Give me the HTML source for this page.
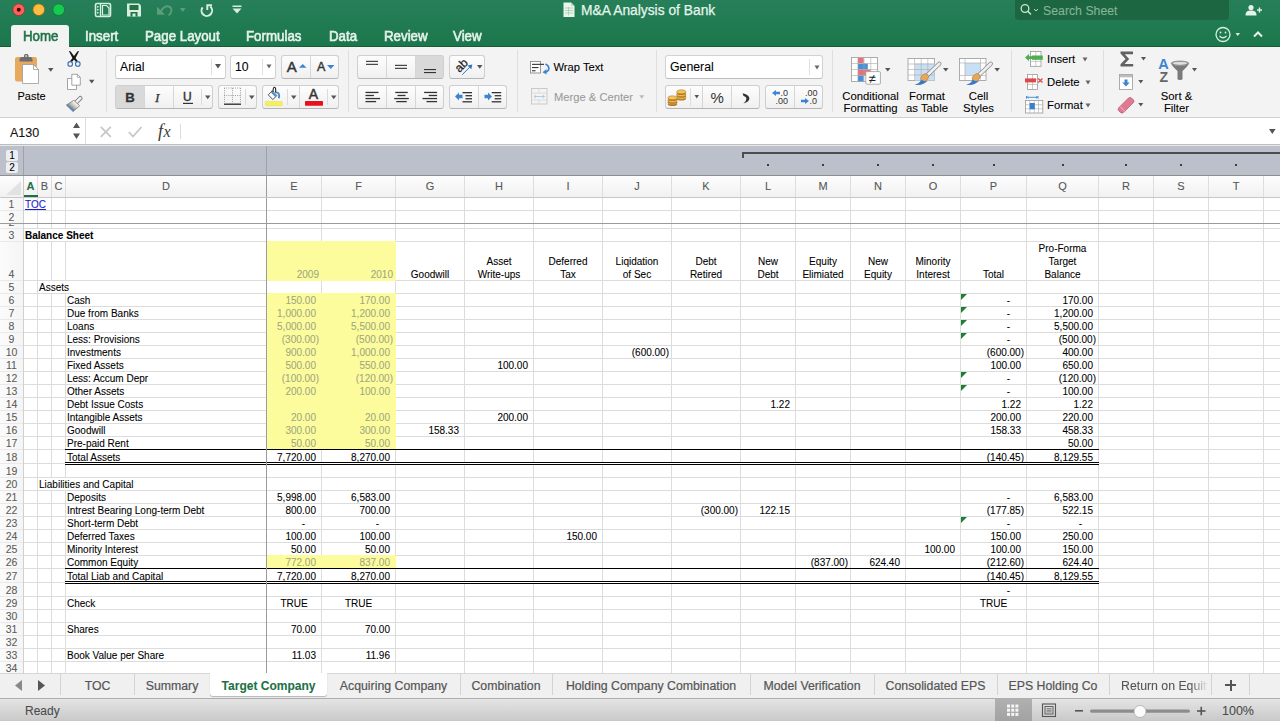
<!DOCTYPE html><html><head><meta charset="utf-8"><style>
*{margin:0;padding:0;box-sizing:border-box}
html,body{width:1280px;height:721px;overflow:hidden;background:#fff;font-family:"Liberation Sans", sans-serif;}
.a{position:absolute}
.t{position:absolute;white-space:pre;font-size:10px;line-height:13px;color:#000;-webkit-text-stroke:0.08px currentColor}
.gl{position:absolute;background:#dcdcdc}

</style></head><body>
<div class="gl" style="left:23px;top:210px;width:1257px;height:1px"></div>
<div class="gl" style="left:23px;top:223px;width:1257px;height:1px"></div>
<div class="gl" style="left:23px;top:241px;width:1257px;height:1px"></div>
<div class="gl" style="left:23px;top:280px;width:1257px;height:1px"></div>
<div class="gl" style="left:23px;top:293px;width:1257px;height:1px"></div>
<div class="gl" style="left:23px;top:306px;width:1257px;height:1px"></div>
<div class="gl" style="left:23px;top:319px;width:1257px;height:1px"></div>
<div class="gl" style="left:23px;top:332px;width:1257px;height:1px"></div>
<div class="gl" style="left:23px;top:345px;width:1257px;height:1px"></div>
<div class="gl" style="left:23px;top:358px;width:1257px;height:1px"></div>
<div class="gl" style="left:23px;top:371px;width:1257px;height:1px"></div>
<div class="gl" style="left:23px;top:384px;width:1257px;height:1px"></div>
<div class="gl" style="left:23px;top:397px;width:1257px;height:1px"></div>
<div class="gl" style="left:23px;top:410px;width:1257px;height:1px"></div>
<div class="gl" style="left:23px;top:423px;width:1257px;height:1px"></div>
<div class="gl" style="left:23px;top:436px;width:1257px;height:1px"></div>
<div class="gl" style="left:23px;top:449px;width:1257px;height:1px"></div>
<div class="gl" style="left:23px;top:463px;width:1257px;height:1px"></div>
<div class="gl" style="left:23px;top:477px;width:1257px;height:1px"></div>
<div class="gl" style="left:23px;top:490px;width:1257px;height:1px"></div>
<div class="gl" style="left:23px;top:503px;width:1257px;height:1px"></div>
<div class="gl" style="left:23px;top:516px;width:1257px;height:1px"></div>
<div class="gl" style="left:23px;top:529px;width:1257px;height:1px"></div>
<div class="gl" style="left:23px;top:542px;width:1257px;height:1px"></div>
<div class="gl" style="left:23px;top:555px;width:1257px;height:1px"></div>
<div class="gl" style="left:23px;top:568px;width:1257px;height:1px"></div>
<div class="gl" style="left:23px;top:582px;width:1257px;height:1px"></div>
<div class="gl" style="left:23px;top:596px;width:1257px;height:1px"></div>
<div class="gl" style="left:23px;top:609px;width:1257px;height:1px"></div>
<div class="gl" style="left:23px;top:622px;width:1257px;height:1px"></div>
<div class="gl" style="left:23px;top:635px;width:1257px;height:1px"></div>
<div class="gl" style="left:23px;top:648px;width:1257px;height:1px"></div>
<div class="gl" style="left:23px;top:661px;width:1257px;height:1px"></div>
<div class="gl" style="left:23px;top:228px;width:1257px;height:1px"></div>
<div class="gl" style="left:37px;top:197px;width:1px;height:27px"></div>
<div class="gl" style="left:37px;top:241px;width:1px;height:432px"></div>
<div class="gl" style="left:51px;top:197px;width:1px;height:27px"></div>
<div class="gl" style="left:51px;top:241px;width:1px;height:40px"></div>
<div class="gl" style="left:51px;top:293px;width:1px;height:185px"></div>
<div class="gl" style="left:51px;top:490px;width:1px;height:183px"></div>
<div class="gl" style="left:65px;top:197px;width:1px;height:27px"></div>
<div class="gl" style="left:65px;top:241px;width:1px;height:40px"></div>
<div class="gl" style="left:65px;top:293px;width:1px;height:185px"></div>
<div class="gl" style="left:65px;top:490px;width:1px;height:183px"></div>
<div class="gl" style="left:266px;top:197px;width:1px;height:476px"></div>
<div class="gl" style="left:321px;top:197px;width:1px;height:476px"></div>
<div class="gl" style="left:395px;top:197px;width:1px;height:476px"></div>
<div class="gl" style="left:464px;top:197px;width:1px;height:476px"></div>
<div class="gl" style="left:533px;top:197px;width:1px;height:476px"></div>
<div class="gl" style="left:602px;top:197px;width:1px;height:476px"></div>
<div class="gl" style="left:671px;top:197px;width:1px;height:476px"></div>
<div class="gl" style="left:740px;top:197px;width:1px;height:476px"></div>
<div class="gl" style="left:795px;top:197px;width:1px;height:476px"></div>
<div class="gl" style="left:850px;top:197px;width:1px;height:476px"></div>
<div class="gl" style="left:905px;top:197px;width:1px;height:476px"></div>
<div class="gl" style="left:960px;top:197px;width:1px;height:476px"></div>
<div class="gl" style="left:1026px;top:197px;width:1px;height:476px"></div>
<div class="gl" style="left:1098px;top:197px;width:1px;height:476px"></div>
<div class="gl" style="left:1153px;top:197px;width:1px;height:476px"></div>
<div class="gl" style="left:1208px;top:197px;width:1px;height:476px"></div>
<div class="gl" style="left:1263px;top:197px;width:1px;height:476px"></div>
<div class="gl" style="left:37px;top:223px;width:1px;height:6px"></div>
<div class="gl" style="left:51px;top:223px;width:1px;height:6px"></div>
<div class="gl" style="left:65px;top:223px;width:1px;height:6px"></div>
<div class="gl" style="left:266px;top:223px;width:1px;height:6px"></div>
<div class="gl" style="left:321px;top:223px;width:1px;height:6px"></div>
<div class="gl" style="left:395px;top:223px;width:1px;height:6px"></div>
<div class="gl" style="left:464px;top:223px;width:1px;height:6px"></div>
<div class="gl" style="left:533px;top:223px;width:1px;height:6px"></div>
<div class="gl" style="left:602px;top:223px;width:1px;height:6px"></div>
<div class="gl" style="left:671px;top:223px;width:1px;height:6px"></div>
<div class="gl" style="left:740px;top:223px;width:1px;height:6px"></div>
<div class="gl" style="left:795px;top:223px;width:1px;height:6px"></div>
<div class="gl" style="left:850px;top:223px;width:1px;height:6px"></div>
<div class="gl" style="left:905px;top:223px;width:1px;height:6px"></div>
<div class="gl" style="left:960px;top:223px;width:1px;height:6px"></div>
<div class="gl" style="left:1026px;top:223px;width:1px;height:6px"></div>
<div class="gl" style="left:1098px;top:223px;width:1px;height:6px"></div>
<div class="gl" style="left:1153px;top:223px;width:1px;height:6px"></div>
<div class="gl" style="left:1208px;top:223px;width:1px;height:6px"></div>
<div class="gl" style="left:1263px;top:223px;width:1px;height:6px"></div>
<div class="a" style="left:267px;top:241px;width:129px;height:40px;background:#fdfc9d"></div>
<div class="a" style="left:267px;top:293px;width:129px;height:157px;background:#fdfc9d"></div>
<div class="a" style="left:267px;top:555px;width:129px;height:14px;background:#fdfc9d"></div>
<div class="a" style="left:65px;top:449px;width:1034px;height:1px;background:#000"></div>
<div class="a" style="left:65px;top:462px;width:1034px;height:1px;background:#000"></div>
<div class="a" style="left:65px;top:463px;width:1034px;height:1px;background:#fff"></div>
<div class="a" style="left:65px;top:464px;width:1034px;height:1px;background:#000"></div>
<div class="a" style="left:65px;top:568px;width:1034px;height:1px;background:#000"></div>
<div class="a" style="left:65px;top:581px;width:1034px;height:1px;background:#000"></div>
<div class="a" style="left:65px;top:582px;width:1034px;height:1px;background:#fff"></div>
<div class="a" style="left:65px;top:583px;width:1034px;height:1px;background:#000"></div>
<div class="t" style="left:25px;top:198px;color:#1a1ad0;text-decoration:underline;">TOC</div>
<div class="t" style="left:25px;top:229px;font-weight:bold;">Balance Sheet</div>
<div class="t" style="left:267px;width:52px;text-align:right;top:268px;color:#a0a781;">2009</div>
<div class="t" style="left:322px;width:71px;text-align:right;top:268px;color:#a0a781;">2010</div>
<div class="t" style="left:39px;top:281px;">Assets</div>
<div class="t" style="left:67px;top:294px;">Cash</div>
<div class="t" style="left:267px;width:49px;text-align:right;top:294px;color:#a0a781;">150.00</div>
<div class="t" style="left:322px;width:68px;text-align:right;top:294px;color:#a0a781;">170.00</div>
<div class="t" style="left:961px;width:49px;text-align:right;top:294px;">-</div>
<div class="t" style="left:1027px;width:66px;text-align:right;top:294px;">170.00</div>
<div class="t" style="left:67px;top:307px;">Due from Banks</div>
<div class="t" style="left:267px;width:49px;text-align:right;top:307px;color:#a0a781;">1,000.00</div>
<div class="t" style="left:322px;width:68px;text-align:right;top:307px;color:#a0a781;">1,200.00</div>
<div class="t" style="left:961px;width:49px;text-align:right;top:307px;">-</div>
<div class="t" style="left:1027px;width:66px;text-align:right;top:307px;">1,200.00</div>
<div class="t" style="left:67px;top:320px;">Loans</div>
<div class="t" style="left:267px;width:49px;text-align:right;top:320px;color:#a0a781;">5,000.00</div>
<div class="t" style="left:322px;width:68px;text-align:right;top:320px;color:#a0a781;">5,500.00</div>
<div class="t" style="left:961px;width:49px;text-align:right;top:320px;">-</div>
<div class="t" style="left:1027px;width:66px;text-align:right;top:320px;">5,500.00</div>
<div class="t" style="left:67px;top:333px;">Less: Provisions</div>
<div class="t" style="left:267px;width:52px;text-align:right;top:333px;color:#a0a781;">(300.00)</div>
<div class="t" style="left:322px;width:71px;text-align:right;top:333px;color:#a0a781;">(500.00)</div>
<div class="t" style="left:961px;width:49px;text-align:right;top:333px;">-</div>
<div class="t" style="left:1027px;width:69px;text-align:right;top:333px;">(500.00)</div>
<div class="t" style="left:67px;top:346px;">Investments</div>
<div class="t" style="left:267px;width:49px;text-align:right;top:346px;color:#a0a781;">900.00</div>
<div class="t" style="left:322px;width:68px;text-align:right;top:346px;color:#a0a781;">1,000.00</div>
<div class="t" style="left:603px;width:66px;text-align:right;top:346px;">(600.00)</div>
<div class="t" style="left:961px;width:63px;text-align:right;top:346px;">(600.00)</div>
<div class="t" style="left:1027px;width:66px;text-align:right;top:346px;">400.00</div>
<div class="t" style="left:67px;top:359px;">Fixed Assets</div>
<div class="t" style="left:267px;width:49px;text-align:right;top:359px;color:#a0a781;">500.00</div>
<div class="t" style="left:322px;width:68px;text-align:right;top:359px;color:#a0a781;">550.00</div>
<div class="t" style="left:465px;width:63px;text-align:right;top:359px;">100.00</div>
<div class="t" style="left:961px;width:60px;text-align:right;top:359px;">100.00</div>
<div class="t" style="left:1027px;width:66px;text-align:right;top:359px;">650.00</div>
<div class="t" style="left:67px;top:372px;">Less: Accum Depr</div>
<div class="t" style="left:267px;width:52px;text-align:right;top:372px;color:#a0a781;">(100.00)</div>
<div class="t" style="left:322px;width:71px;text-align:right;top:372px;color:#a0a781;">(120.00)</div>
<div class="t" style="left:961px;width:49px;text-align:right;top:372px;">-</div>
<div class="t" style="left:1027px;width:69px;text-align:right;top:372px;">(120.00)</div>
<div class="t" style="left:67px;top:385px;">Other Assets</div>
<div class="t" style="left:267px;width:49px;text-align:right;top:385px;color:#a0a781;">200.00</div>
<div class="t" style="left:322px;width:68px;text-align:right;top:385px;color:#a0a781;">100.00</div>
<div class="t" style="left:961px;width:49px;text-align:right;top:385px;">-</div>
<div class="t" style="left:1027px;width:66px;text-align:right;top:385px;">100.00</div>
<div class="t" style="left:67px;top:398px;">Debt Issue Costs</div>
<div class="t" style="left:741px;width:49px;text-align:right;top:398px;">1.22</div>
<div class="t" style="left:961px;width:60px;text-align:right;top:398px;">1.22</div>
<div class="t" style="left:1027px;width:66px;text-align:right;top:398px;">1.22</div>
<div class="t" style="left:67px;top:411px;">Intangible Assets</div>
<div class="t" style="left:267px;width:49px;text-align:right;top:411px;color:#a0a781;">20.00</div>
<div class="t" style="left:322px;width:68px;text-align:right;top:411px;color:#a0a781;">20.00</div>
<div class="t" style="left:465px;width:63px;text-align:right;top:411px;">200.00</div>
<div class="t" style="left:961px;width:60px;text-align:right;top:411px;">200.00</div>
<div class="t" style="left:1027px;width:66px;text-align:right;top:411px;">220.00</div>
<div class="t" style="left:67px;top:424px;">Goodwill</div>
<div class="t" style="left:267px;width:49px;text-align:right;top:424px;color:#a0a781;">300.00</div>
<div class="t" style="left:322px;width:68px;text-align:right;top:424px;color:#a0a781;">300.00</div>
<div class="t" style="left:396px;width:63px;text-align:right;top:424px;">158.33</div>
<div class="t" style="left:961px;width:60px;text-align:right;top:424px;">158.33</div>
<div class="t" style="left:1027px;width:66px;text-align:right;top:424px;">458.33</div>
<div class="t" style="left:67px;top:437px;">Pre-paid Rent</div>
<div class="t" style="left:267px;width:49px;text-align:right;top:437px;color:#a0a781;">50.00</div>
<div class="t" style="left:322px;width:68px;text-align:right;top:437px;color:#a0a781;">50.00</div>
<div class="t" style="left:1027px;width:66px;text-align:right;top:437px;">50.00</div>
<div class="t" style="left:67px;top:451px;">Total Assets</div>
<div class="t" style="left:267px;width:49px;text-align:right;top:451px;">7,720.00</div>
<div class="t" style="left:322px;width:68px;text-align:right;top:451px;">8,270.00</div>
<div class="t" style="left:961px;width:63px;text-align:right;top:451px;">(140.45)</div>
<div class="t" style="left:1027px;width:66px;text-align:right;top:451px;">8,129.55</div>
<div class="t" style="left:39px;top:478px;">Liabilities and Capital</div>
<div class="t" style="left:67px;top:491px;">Deposits</div>
<div class="t" style="left:267px;width:49px;text-align:right;top:491px;">5,998.00</div>
<div class="t" style="left:322px;width:68px;text-align:right;top:491px;">6,583.00</div>
<div class="t" style="left:961px;width:49px;text-align:right;top:491px;">-</div>
<div class="t" style="left:1027px;width:66px;text-align:right;top:491px;">6,583.00</div>
<div class="t" style="left:67px;top:504px;">Intrest Bearing Long-term Debt</div>
<div class="t" style="left:267px;width:49px;text-align:right;top:504px;">800.00</div>
<div class="t" style="left:322px;width:68px;text-align:right;top:504px;">700.00</div>
<div class="t" style="left:672px;width:66px;text-align:right;top:504px;">(300.00)</div>
<div class="t" style="left:741px;width:49px;text-align:right;top:504px;">122.15</div>
<div class="t" style="left:961px;width:63px;text-align:right;top:504px;">(177.85)</div>
<div class="t" style="left:1027px;width:66px;text-align:right;top:504px;">522.15</div>
<div class="t" style="left:67px;top:517px;">Short-term Debt</div>
<div class="t" style="left:267px;width:38px;text-align:right;top:517px;">-</div>
<div class="t" style="left:322px;width:57px;text-align:right;top:517px;">-</div>
<div class="t" style="left:961px;width:49px;text-align:right;top:517px;">-</div>
<div class="t" style="left:1027px;width:55px;text-align:right;top:517px;">-</div>
<div class="t" style="left:67px;top:530px;">Deferred Taxes</div>
<div class="t" style="left:267px;width:49px;text-align:right;top:530px;">100.00</div>
<div class="t" style="left:322px;width:68px;text-align:right;top:530px;">100.00</div>
<div class="t" style="left:534px;width:63px;text-align:right;top:530px;">150.00</div>
<div class="t" style="left:961px;width:60px;text-align:right;top:530px;">150.00</div>
<div class="t" style="left:1027px;width:66px;text-align:right;top:530px;">250.00</div>
<div class="t" style="left:67px;top:543px;">Minority Interest</div>
<div class="t" style="left:267px;width:49px;text-align:right;top:543px;">50.00</div>
<div class="t" style="left:322px;width:68px;text-align:right;top:543px;">50.00</div>
<div class="t" style="left:906px;width:49px;text-align:right;top:543px;">100.00</div>
<div class="t" style="left:961px;width:60px;text-align:right;top:543px;">100.00</div>
<div class="t" style="left:1027px;width:66px;text-align:right;top:543px;">150.00</div>
<div class="t" style="left:67px;top:556px;">Common Equity</div>
<div class="t" style="left:267px;width:49px;text-align:right;top:556px;color:#a0a781;">772.00</div>
<div class="t" style="left:322px;width:68px;text-align:right;top:556px;color:#a0a781;">837.00</div>
<div class="t" style="left:796px;width:52px;text-align:right;top:556px;">(837.00)</div>
<div class="t" style="left:851px;width:49px;text-align:right;top:556px;">624.40</div>
<div class="t" style="left:961px;width:63px;text-align:right;top:556px;">(212.60)</div>
<div class="t" style="left:1027px;width:66px;text-align:right;top:556px;">624.40</div>
<div class="t" style="left:67px;top:570px;">Total Liab and Capital</div>
<div class="t" style="left:267px;width:49px;text-align:right;top:570px;">7,720.00</div>
<div class="t" style="left:322px;width:68px;text-align:right;top:570px;">8,270.00</div>
<div class="t" style="left:961px;width:63px;text-align:right;top:570px;">(140.45)</div>
<div class="t" style="left:1027px;width:66px;text-align:right;top:570px;">8,129.55</div>
<div class="t" style="left:961px;width:49px;text-align:right;top:584px;">-</div>
<div class="t" style="left:67px;top:597px;">Check</div>
<div class="t" style="left:267px;width:54px;text-align:center;top:597px;">TRUE</div>
<div class="t" style="left:322px;width:73px;text-align:center;top:597px;">TRUE</div>
<div class="t" style="left:961px;width:65px;text-align:center;top:597px;">TRUE</div>
<div class="t" style="left:67px;top:623px;">Shares</div>
<div class="t" style="left:267px;width:49px;text-align:right;top:623px;">70.00</div>
<div class="t" style="left:322px;width:68px;text-align:right;top:623px;">70.00</div>
<div class="t" style="left:67px;top:649px;">Book Value per Share</div>
<div class="t" style="left:267px;width:49px;text-align:right;top:649px;">11.03</div>
<div class="t" style="left:322px;width:68px;text-align:right;top:649px;">11.96</div>
<div class="t" style="left:396px;width:68px;text-align:center;top:268px">Goodwill</div>
<div class="t" style="left:465px;width:68px;text-align:center;top:255px">Asset<br>Write-ups</div>
<div class="t" style="left:534px;width:68px;text-align:center;top:255px">Deferred<br>Tax</div>
<div class="t" style="left:603px;width:68px;text-align:center;top:255px">Liqidation<br>of Sec</div>
<div class="t" style="left:672px;width:68px;text-align:center;top:255px">Debt<br>Retired</div>
<div class="t" style="left:741px;width:54px;text-align:center;top:255px">New<br>Debt</div>
<div class="t" style="left:796px;width:54px;text-align:center;top:255px">Equity<br>Elimiated</div>
<div class="t" style="left:851px;width:54px;text-align:center;top:255px">New<br>Equity</div>
<div class="t" style="left:906px;width:54px;text-align:center;top:255px">Minority<br>Interest</div>
<div class="t" style="left:961px;width:65px;text-align:center;top:268px">Total</div>
<div class="t" style="left:1027px;width:71px;text-align:center;top:242px">Pro-Forma<br>Target<br>Balance</div>
<svg class="a" style="left:961px;top:294px" width="6" height="6"><path d="M0 0H6L0 6Z" fill="#1e7e34"/></svg>
<svg class="a" style="left:961px;top:307px" width="6" height="6"><path d="M0 0H6L0 6Z" fill="#1e7e34"/></svg>
<svg class="a" style="left:961px;top:320px" width="6" height="6"><path d="M0 0H6L0 6Z" fill="#1e7e34"/></svg>
<svg class="a" style="left:961px;top:333px" width="6" height="6"><path d="M0 0H6L0 6Z" fill="#1e7e34"/></svg>
<svg class="a" style="left:961px;top:372px" width="6" height="6"><path d="M0 0H6L0 6Z" fill="#1e7e34"/></svg>
<svg class="a" style="left:961px;top:385px" width="6" height="6"><path d="M0 0H6L0 6Z" fill="#1e7e34"/></svg>
<svg class="a" style="left:961px;top:517px" width="6" height="6"><path d="M0 0H6L0 6Z" fill="#1e7e34"/></svg>
<div class="a" style="left:0;top:223px;width:1280px;height:1px;background:#9b9b9b"></div>
<div class="a" style="left:266px;top:175px;width:1px;height:498px;background:#9b9b9b"></div>
<div class="a" style="left:0;top:197px;width:23px;height:476px;background:linear-gradient(90deg,#fbfbfb,#f5f5f5)"></div>
<div class="a" style="left:23px;top:197px;width:1px;height:476px;background:#d0d0d0"></div>
<div class="a" style="left:0;top:210px;width:23px;height:1px;background:#e9e9e9"></div>
<div class="t" style="left:0;width:23px;text-align:center;top:198px;font-size:10.5px;color:#5a5a5a">1</div>
<div class="a" style="left:0;top:223px;width:23px;height:1px;background:#e9e9e9"></div>
<div class="t" style="left:0;width:23px;text-align:center;top:211px;font-size:10.5px;color:#5a5a5a">2</div>
<div class="a" style="left:0;top:241px;width:23px;height:1px;background:#e9e9e9"></div>
<div class="t" style="left:0;width:23px;text-align:center;top:229px;font-size:10.5px;color:#5a5a5a">3</div>
<div class="a" style="left:0;top:280px;width:23px;height:1px;background:#e9e9e9"></div>
<div class="t" style="left:0;width:23px;text-align:center;top:268px;font-size:10.5px;color:#5a5a5a">4</div>
<div class="a" style="left:0;top:293px;width:23px;height:1px;background:#e9e9e9"></div>
<div class="t" style="left:0;width:23px;text-align:center;top:281px;font-size:10.5px;color:#5a5a5a">5</div>
<div class="a" style="left:0;top:306px;width:23px;height:1px;background:#e9e9e9"></div>
<div class="t" style="left:0;width:23px;text-align:center;top:294px;font-size:10.5px;color:#5a5a5a">6</div>
<div class="a" style="left:0;top:319px;width:23px;height:1px;background:#e9e9e9"></div>
<div class="t" style="left:0;width:23px;text-align:center;top:307px;font-size:10.5px;color:#5a5a5a">7</div>
<div class="a" style="left:0;top:332px;width:23px;height:1px;background:#e9e9e9"></div>
<div class="t" style="left:0;width:23px;text-align:center;top:320px;font-size:10.5px;color:#5a5a5a">8</div>
<div class="a" style="left:0;top:345px;width:23px;height:1px;background:#e9e9e9"></div>
<div class="t" style="left:0;width:23px;text-align:center;top:333px;font-size:10.5px;color:#5a5a5a">9</div>
<div class="a" style="left:0;top:358px;width:23px;height:1px;background:#e9e9e9"></div>
<div class="t" style="left:0;width:23px;text-align:center;top:346px;font-size:10.5px;color:#5a5a5a">10</div>
<div class="a" style="left:0;top:371px;width:23px;height:1px;background:#e9e9e9"></div>
<div class="t" style="left:0;width:23px;text-align:center;top:359px;font-size:10.5px;color:#5a5a5a">11</div>
<div class="a" style="left:0;top:384px;width:23px;height:1px;background:#e9e9e9"></div>
<div class="t" style="left:0;width:23px;text-align:center;top:372px;font-size:10.5px;color:#5a5a5a">12</div>
<div class="a" style="left:0;top:397px;width:23px;height:1px;background:#e9e9e9"></div>
<div class="t" style="left:0;width:23px;text-align:center;top:385px;font-size:10.5px;color:#5a5a5a">13</div>
<div class="a" style="left:0;top:410px;width:23px;height:1px;background:#e9e9e9"></div>
<div class="t" style="left:0;width:23px;text-align:center;top:398px;font-size:10.5px;color:#5a5a5a">14</div>
<div class="a" style="left:0;top:423px;width:23px;height:1px;background:#e9e9e9"></div>
<div class="t" style="left:0;width:23px;text-align:center;top:411px;font-size:10.5px;color:#5a5a5a">15</div>
<div class="a" style="left:0;top:436px;width:23px;height:1px;background:#e9e9e9"></div>
<div class="t" style="left:0;width:23px;text-align:center;top:424px;font-size:10.5px;color:#5a5a5a">16</div>
<div class="a" style="left:0;top:449px;width:23px;height:1px;background:#e9e9e9"></div>
<div class="t" style="left:0;width:23px;text-align:center;top:437px;font-size:10.5px;color:#5a5a5a">17</div>
<div class="a" style="left:0;top:463px;width:23px;height:1px;background:#e9e9e9"></div>
<div class="t" style="left:0;width:23px;text-align:center;top:451px;font-size:10.5px;color:#5a5a5a">18</div>
<div class="a" style="left:0;top:477px;width:23px;height:1px;background:#e9e9e9"></div>
<div class="t" style="left:0;width:23px;text-align:center;top:465px;font-size:10.5px;color:#5a5a5a">19</div>
<div class="a" style="left:0;top:490px;width:23px;height:1px;background:#e9e9e9"></div>
<div class="t" style="left:0;width:23px;text-align:center;top:478px;font-size:10.5px;color:#5a5a5a">20</div>
<div class="a" style="left:0;top:503px;width:23px;height:1px;background:#e9e9e9"></div>
<div class="t" style="left:0;width:23px;text-align:center;top:491px;font-size:10.5px;color:#5a5a5a">21</div>
<div class="a" style="left:0;top:516px;width:23px;height:1px;background:#e9e9e9"></div>
<div class="t" style="left:0;width:23px;text-align:center;top:504px;font-size:10.5px;color:#5a5a5a">22</div>
<div class="a" style="left:0;top:529px;width:23px;height:1px;background:#e9e9e9"></div>
<div class="t" style="left:0;width:23px;text-align:center;top:517px;font-size:10.5px;color:#5a5a5a">23</div>
<div class="a" style="left:0;top:542px;width:23px;height:1px;background:#e9e9e9"></div>
<div class="t" style="left:0;width:23px;text-align:center;top:530px;font-size:10.5px;color:#5a5a5a">24</div>
<div class="a" style="left:0;top:555px;width:23px;height:1px;background:#e9e9e9"></div>
<div class="t" style="left:0;width:23px;text-align:center;top:543px;font-size:10.5px;color:#5a5a5a">25</div>
<div class="a" style="left:0;top:568px;width:23px;height:1px;background:#e9e9e9"></div>
<div class="t" style="left:0;width:23px;text-align:center;top:556px;font-size:10.5px;color:#5a5a5a">26</div>
<div class="a" style="left:0;top:582px;width:23px;height:1px;background:#e9e9e9"></div>
<div class="t" style="left:0;width:23px;text-align:center;top:570px;font-size:10.5px;color:#5a5a5a">27</div>
<div class="a" style="left:0;top:596px;width:23px;height:1px;background:#e9e9e9"></div>
<div class="t" style="left:0;width:23px;text-align:center;top:584px;font-size:10.5px;color:#5a5a5a">28</div>
<div class="a" style="left:0;top:609px;width:23px;height:1px;background:#e9e9e9"></div>
<div class="t" style="left:0;width:23px;text-align:center;top:597px;font-size:10.5px;color:#5a5a5a">29</div>
<div class="a" style="left:0;top:622px;width:23px;height:1px;background:#e9e9e9"></div>
<div class="t" style="left:0;width:23px;text-align:center;top:610px;font-size:10.5px;color:#5a5a5a">30</div>
<div class="a" style="left:0;top:635px;width:23px;height:1px;background:#e9e9e9"></div>
<div class="t" style="left:0;width:23px;text-align:center;top:623px;font-size:10.5px;color:#5a5a5a">31</div>
<div class="a" style="left:0;top:648px;width:23px;height:1px;background:#e9e9e9"></div>
<div class="t" style="left:0;width:23px;text-align:center;top:636px;font-size:10.5px;color:#5a5a5a">32</div>
<div class="a" style="left:0;top:661px;width:23px;height:1px;background:#e9e9e9"></div>
<div class="t" style="left:0;width:23px;text-align:center;top:649px;font-size:10.5px;color:#5a5a5a">33</div>
<div class="t" style="left:0;width:23px;text-align:center;top:662px;font-size:10.5px;color:#5a5a5a">34</div>
<div class="a" style="left:0;top:228px;width:23px;height:1px;background:#e9e9e9"></div>
<div class="a" style="left:0;top:224px;width:23px;height:4px;overflow:hidden"><div class="t" style="left:0;width:23px;text-align:center;top:-8px;font-size:10.5px;color:#5a5a5a">2</div></div>
<div class="a" style="left:0;top:223px;width:1280px;height:1px;background:#9b9b9b"></div>
<div class="a" style="left:0;top:175px;width:1280px;height:22px;background:linear-gradient(#fefefe,#f1f1f1)"></div>
<div class="a" style="left:0;top:175px;width:1280px;height:1px;background:#8e8e8e"></div>
<div class="a" style="left:0;top:197px;width:1280px;height:1px;background:#c8c8c8"></div>
<div class="a" style="left:37px;top:176px;width:1px;height:21px;background:#dedede"></div>
<div class="t" style="left:24px;width:13px;text-align:center;top:180px;font-size:11px;color:#1e7145;font-weight:bold;">A</div>
<div class="a" style="left:51px;top:176px;width:1px;height:21px;background:#dedede"></div>
<div class="t" style="left:38px;width:13px;text-align:center;top:180px;font-size:11px;color:#555;">B</div>
<div class="a" style="left:65px;top:176px;width:1px;height:21px;background:#dedede"></div>
<div class="t" style="left:52px;width:13px;text-align:center;top:180px;font-size:11px;color:#555;">C</div>
<div class="a" style="left:266px;top:176px;width:1px;height:21px;background:#dedede"></div>
<div class="t" style="left:66px;width:200px;text-align:center;top:180px;font-size:11px;color:#555;">D</div>
<div class="a" style="left:321px;top:176px;width:1px;height:21px;background:#dedede"></div>
<div class="t" style="left:267px;width:54px;text-align:center;top:180px;font-size:11px;color:#555;">E</div>
<div class="a" style="left:395px;top:176px;width:1px;height:21px;background:#dedede"></div>
<div class="t" style="left:322px;width:73px;text-align:center;top:180px;font-size:11px;color:#555;">F</div>
<div class="a" style="left:464px;top:176px;width:1px;height:21px;background:#dedede"></div>
<div class="t" style="left:396px;width:68px;text-align:center;top:180px;font-size:11px;color:#555;">G</div>
<div class="a" style="left:533px;top:176px;width:1px;height:21px;background:#dedede"></div>
<div class="t" style="left:465px;width:68px;text-align:center;top:180px;font-size:11px;color:#555;">H</div>
<div class="a" style="left:602px;top:176px;width:1px;height:21px;background:#dedede"></div>
<div class="t" style="left:534px;width:68px;text-align:center;top:180px;font-size:11px;color:#555;">I</div>
<div class="a" style="left:671px;top:176px;width:1px;height:21px;background:#dedede"></div>
<div class="t" style="left:603px;width:68px;text-align:center;top:180px;font-size:11px;color:#555;">J</div>
<div class="a" style="left:740px;top:176px;width:1px;height:21px;background:#dedede"></div>
<div class="t" style="left:672px;width:68px;text-align:center;top:180px;font-size:11px;color:#555;">K</div>
<div class="a" style="left:795px;top:176px;width:1px;height:21px;background:#dedede"></div>
<div class="t" style="left:741px;width:54px;text-align:center;top:180px;font-size:11px;color:#555;">L</div>
<div class="a" style="left:850px;top:176px;width:1px;height:21px;background:#dedede"></div>
<div class="t" style="left:796px;width:54px;text-align:center;top:180px;font-size:11px;color:#555;">M</div>
<div class="a" style="left:905px;top:176px;width:1px;height:21px;background:#dedede"></div>
<div class="t" style="left:851px;width:54px;text-align:center;top:180px;font-size:11px;color:#555;">N</div>
<div class="a" style="left:960px;top:176px;width:1px;height:21px;background:#dedede"></div>
<div class="t" style="left:906px;width:54px;text-align:center;top:180px;font-size:11px;color:#555;">O</div>
<div class="a" style="left:1026px;top:176px;width:1px;height:21px;background:#dedede"></div>
<div class="t" style="left:961px;width:65px;text-align:center;top:180px;font-size:11px;color:#555;">P</div>
<div class="a" style="left:1098px;top:176px;width:1px;height:21px;background:#dedede"></div>
<div class="t" style="left:1027px;width:71px;text-align:center;top:180px;font-size:11px;color:#555;">Q</div>
<div class="a" style="left:1153px;top:176px;width:1px;height:21px;background:#dedede"></div>
<div class="t" style="left:1099px;width:54px;text-align:center;top:180px;font-size:11px;color:#555;">R</div>
<div class="a" style="left:1208px;top:176px;width:1px;height:21px;background:#dedede"></div>
<div class="t" style="left:1154px;width:54px;text-align:center;top:180px;font-size:11px;color:#555;">S</div>
<div class="a" style="left:1263px;top:176px;width:1px;height:21px;background:#dedede"></div>
<div class="t" style="left:1209px;width:54px;text-align:center;top:180px;font-size:11px;color:#555;">T</div>
<div class="a" style="left:1318px;top:176px;width:1px;height:21px;background:#dedede"></div>
<div class="t" style="left:1264px;width:54px;text-align:center;top:180px;font-size:11px;color:#555;">U</div>
<div class="a" style="left:23px;top:176px;width:1px;height:21px;background:#c8c8c8"></div>
<div class="a" style="left:266px;top:175px;width:1px;height:22px;background:#9b9b9b"></div>
<div class="a" style="left:24px;top:195px;width:14px;height:2px;background:#1e7145"></div>
<svg class="a" style="left:5px;top:181px" width="17" height="15"><path d="M16 0V14H1Z" fill="#e2e2e2"/></svg>
<div class="a" style="left:0;top:144px;width:1280px;height:1px;background:#bdbdbd"></div>
<div class="a" style="left:0;top:145px;width:1280px;height:1px;background:#e8e8e8"></div>
<div class="a" style="left:0;top:146px;width:1280px;height:29px;background:#bcc0cb"></div>
<div class="a" style="left:23px;top:146px;width:1px;height:29px;background:#9ea2aa"></div>
<div class="a" style="left:266px;top:146px;width:1px;height:29px;background:#9ea2aa"></div>
<div class="a" style="left:6px;top:150px;width:12px;height:11px;background:#eceef1;border-radius:2px"></div>
<div class="a" style="left:6px;top:162px;width:12px;height:11px;background:#eceef1;border-radius:2px"></div>
<div class="t" style="left:6px;width:12px;text-align:center;top:149px;font-size:10px;color:#000">1</div>
<div class="t" style="left:6px;width:12px;text-align:center;top:161px;font-size:10px;color:#000">2</div>
<div class="a" style="left:742px;top:152px;width:538px;height:2px;background:#4a4d52"></div>
<div class="a" style="left:742px;top:152px;width:2px;height:6px;background:#4a4d52"></div>
<div class="a" style="left:767px;top:164px;width:2px;height:2px;background:#3a3d42"></div>
<div class="a" style="left:822px;top:164px;width:2px;height:2px;background:#3a3d42"></div>
<div class="a" style="left:877px;top:164px;width:2px;height:2px;background:#3a3d42"></div>
<div class="a" style="left:932px;top:164px;width:2px;height:2px;background:#3a3d42"></div>
<div class="a" style="left:993px;top:164px;width:2px;height:2px;background:#3a3d42"></div>
<div class="a" style="left:1062px;top:164px;width:2px;height:2px;background:#3a3d42"></div>
<div class="a" style="left:1125px;top:164px;width:2px;height:2px;background:#3a3d42"></div>
<div class="a" style="left:1180px;top:164px;width:2px;height:2px;background:#3a3d42"></div>
<div class="a" style="left:1235px;top:164px;width:2px;height:2px;background:#3a3d42"></div>
<div class="a" style="left:0;top:117px;width:1280px;height:27px;background:#fff"></div>
<div class="a" style="left:0;top:117px;width:1280px;height:1px;background:#d0d0d0"></div>
<div class="a" style="left:85px;top:118px;width:1px;height:26px;background:#dcdcdc"></div>
<div class="t" style="left:10px;top:126px;font-size:12.5px;line-height:14px;color:#111">A130</div>
<svg class="a" style="left:72px;top:122px" width="10" height="18"><path d="M1 6L4.5 0.5L8 6Z M1 11.5L8 11.5L4.5 17Z" fill="#555"/></svg>
<svg class="a" style="left:100px;top:126px" width="12" height="12"><path d="M0.8 0.8L10.8 10.8M10.8 0.8L0.8 10.8" stroke="#c6c6c6" stroke-width="1.7"/></svg>
<svg class="a" style="left:128px;top:126px" width="15" height="12"><path d="M0.8 6L5 10.5L13.5 1" stroke="#c6c6c6" stroke-width="1.8" fill="none"/></svg>
<div class="a" style="left:158px;top:121px;font-family:'Liberation Serif',serif;font-style:italic;font-size:18px;color:#3a3a3a;line-height:20px;letter-spacing:0.5px">f<span style="font-size:16px">x</span></div>
<div class="a" style="left:180px;top:124px;width:1px;height:15px;background:#dcdcdc"></div>
<svg class="a" style="left:1269px;top:129px" width="7" height="6"><path d="M0 0H6.6L3.3 5Z" fill="#555"/></svg>
<div class="a" style="left:0;top:673px;width:1280px;height:26px;background:#f0f0f0;border-top:1px solid #d6d6d6"></div>
<div class="a" style="left:0;top:698px;width:1280px;height:1px;background:#aeaeae"></div>
<div class="a" style="left:134px;top:674px;width:1px;height:21px;background:#d3d3d3"></div>
<div class="t" style="left:61px;width:73px;text-align:center;top:679px;font-size:12.3px;line-height:15px;color:#555;overflow:hidden;-webkit-text-stroke:0.2px #555">TOC</div>
<div class="a" style="left:210px;top:674px;width:1px;height:21px;background:#d3d3d3"></div>
<div class="t" style="left:134px;width:76px;text-align:center;top:679px;font-size:12.3px;line-height:15px;color:#555;overflow:hidden;-webkit-text-stroke:0.2px #555">Summary</div>
<div class="a" style="left:210px;top:673px;width:117px;height:23px;background:#fff;border-radius:0 0 3px 3px;box-shadow:0 1px 1px rgba(0,0,0,.25)"></div>
<div class="t" style="left:210px;width:117px;text-align:center;top:679px;font-size:12px;line-height:15px;font-weight:bold;color:#1e7145">Target Company</div>
<div class="a" style="left:460px;top:674px;width:1px;height:21px;background:#d3d3d3"></div>
<div class="t" style="left:327px;width:133px;text-align:center;top:679px;font-size:12.3px;line-height:15px;color:#555;overflow:hidden;-webkit-text-stroke:0.2px #555">Acquiring Company</div>
<div class="a" style="left:552px;top:674px;width:1px;height:21px;background:#d3d3d3"></div>
<div class="t" style="left:460px;width:92px;text-align:center;top:679px;font-size:12.3px;line-height:15px;color:#555;overflow:hidden;-webkit-text-stroke:0.2px #555">Combination</div>
<div class="a" style="left:750px;top:674px;width:1px;height:21px;background:#d3d3d3"></div>
<div class="t" style="left:552px;width:198px;text-align:center;top:679px;font-size:12.3px;line-height:15px;color:#555;overflow:hidden;-webkit-text-stroke:0.2px #555">Holding Company Combination</div>
<div class="a" style="left:874px;top:674px;width:1px;height:21px;background:#d3d3d3"></div>
<div class="t" style="left:750px;width:124px;text-align:center;top:679px;font-size:12.3px;line-height:15px;color:#555;overflow:hidden;-webkit-text-stroke:0.2px #555">Model Verification</div>
<div class="a" style="left:997px;top:674px;width:1px;height:21px;background:#d3d3d3"></div>
<div class="t" style="left:874px;width:123px;text-align:center;top:679px;font-size:12.3px;line-height:15px;color:#555;overflow:hidden;-webkit-text-stroke:0.2px #555">Consolidated EPS</div>
<div class="a" style="left:1109px;top:674px;width:1px;height:21px;background:#d3d3d3"></div>
<div class="t" style="left:997px;width:112px;text-align:center;top:679px;font-size:12.3px;line-height:15px;color:#555;overflow:hidden;-webkit-text-stroke:0.2px #555">EPS Holding Co</div>
<div class="a" style="left:60px;top:674px;width:1px;height:21px;background:#d3d3d3"></div>
<div class="a" style="left:1121px;top:679px;width:87px;height:15px;overflow:hidden;-webkit-mask-image:linear-gradient(90deg,#000 80%,transparent)"><div class="t" style="left:0;top:0;font-size:12.3px;line-height:15px;color:#555">Return on Equity</div></div>
<div class="a" style="left:1211px;top:674px;width:1px;height:21px;background:#d3d3d3"></div>
<div class="a" style="left:1249px;top:674px;width:1px;height:21px;background:#d3d3d3"></div>
<svg class="a" style="left:14px;top:680px" width="10" height="12"><path d="M8 0V11L1 5.5Z" fill="#888"/></svg>
<svg class="a" style="left:37px;top:680px" width="10" height="12"><path d="M1 0V11L8 5.5Z" fill="#555"/></svg>
<div class="a" style="left:1225px;top:684px;width:11px;height:2px;background:#555"></div>
<div class="a" style="left:1229.5px;top:679.5px;width:2px;height:11px;background:#555"></div>
<div class="a" style="left:0;top:699px;width:1280px;height:22px;background:linear-gradient(#e4e4e4,#c9c9c9)"></div>
<div class="t" style="left:25px;top:704px;font-size:12px;line-height:15px;color:#4a4a4a">Ready</div>
<div class="a" style="left:995px;top:699px;width:37px;height:22px;background:linear-gradient(#b0b0b0,#a2a2a2)"></div>
<svg class="a" style="left:0;top:699px" width="1280" height="22" viewBox="0 699 1280 22"><g fill="#f4f4f4"><rect x="1007.0" y="704.5" width="3" height="3"/><rect x="1007.0" y="708.7" width="3" height="3"/><rect x="1007.0" y="712.9" width="3" height="3"/><rect x="1011.2" y="704.5" width="3" height="3"/><rect x="1011.2" y="708.7" width="3" height="3"/><rect x="1011.2" y="712.9" width="3" height="3"/><rect x="1015.4" y="704.5" width="3" height="3"/><rect x="1015.4" y="708.7" width="3" height="3"/><rect x="1015.4" y="712.9" width="3" height="3"/></g><rect x="1042.5" y="704" width="13" height="12.5" fill="none" stroke="#555" stroke-width="1.1"/><rect x="1045" y="706.5" width="8" height="7.5" fill="none" stroke="#555" stroke-width="0.9"/><path d="M1046.5 708.7H1051.5M1046.5 710.3H1051.5M1046.5 711.9H1051.5" stroke="#555" stroke-width="0.7"/><rect x="1075" y="710" width="8" height="1.6" fill="#555"/><rect x="1090" y="709.5" width="100" height="3.2" rx="1.6" fill="#8d8d8d"/><circle cx="1140" cy="711.5" r="6" fill="#fbfbfb" stroke="#9a9a9a" stroke-width="0.6"/><rect x="1197" y="710.2" width="8.5" height="1.6" fill="#555"/><rect x="1200.45" y="706.8" width="1.6" height="8.5" fill="#555"/></svg>
<div class="t" style="left:1222px;top:704px;font-size:12.5px;line-height:15px;color:#4a4a4a">100%</div>
<div class="a" style="left:0;top:0;width:1280px;height:47px;background:linear-gradient(#267f59,#1b774b)"></div>
<div class="a" style="left:0;top:46px;width:1280px;height:1px;background:#1a5c3a"></div>
<svg class="a" style="left:0;top:0" width="80" height="22"><circle cx="18.75" cy="9.7" r="5.9" fill="#fd625a" stroke="#9e3a33" stroke-width="0.9"/><circle cx="18.75" cy="9.7" r="2" fill="#4a0202"/><circle cx="38.75" cy="9.7" r="5.9" fill="#fdbd41" stroke="#8f6a1a" stroke-width="0.9"/><circle cx="58.75" cy="9.7" r="5.9" fill="#14cb4f" stroke="#127a34" stroke-width="0.9"/></svg>
<div class="t" style="left:581px;top:2px;font-size:13.8px;line-height:17px;color:#e6f5ec;-webkit-text-stroke:0.25px #e6f5ec">M&amp;A Analysis of Bank</div>
<div class="a" style="left:1015px;top:0;width:214px;height:20px;background:#1d6642;border-radius:0 0 4px 4px"></div>
<div class="t" style="left:1043px;top:4px;font-size:12.3px;line-height:15px;color:#86b597">Search Sheet</div>
<div class="a" style="left:11px;top:25px;width:58px;height:22px;background:#f3f3f3;border-radius:3px 3px 0 0"></div>
<div class="t" style="left:22.5px;top:28px;font-size:14px;line-height:16px;color:#217346;-webkit-text-stroke:0.6px #217346;transform:scaleX(0.95);transform-origin:0 0">Home</div>
<div class="t" style="left:84.5px;top:28px;font-size:14px;line-height:16px;color:#e6f2ea;-webkit-text-stroke:0.6px #e6f2ea;transform:scaleX(0.95);transform-origin:0 0">Insert</div>
<div class="t" style="left:144.5px;top:28px;font-size:14px;line-height:16px;color:#e6f2ea;-webkit-text-stroke:0.6px #e6f2ea;transform:scaleX(0.95);transform-origin:0 0">Page Layout</div>
<div class="t" style="left:246px;top:28px;font-size:14px;line-height:16px;color:#e6f2ea;-webkit-text-stroke:0.6px #e6f2ea;transform:scaleX(0.95);transform-origin:0 0">Formulas</div>
<div class="t" style="left:328.5px;top:28px;font-size:14px;line-height:16px;color:#e6f2ea;-webkit-text-stroke:0.6px #e6f2ea;transform:scaleX(0.95);transform-origin:0 0">Data</div>
<div class="t" style="left:383.5px;top:28px;font-size:14px;line-height:16px;color:#e6f2ea;-webkit-text-stroke:0.6px #e6f2ea;transform:scaleX(0.95);transform-origin:0 0">Review</div>
<div class="t" style="left:452.8px;top:28px;font-size:14px;line-height:16px;color:#e6f2ea;-webkit-text-stroke:0.6px #e6f2ea;transform:scaleX(0.95);transform-origin:0 0">View</div>
<div class="a" style="left:0;top:47px;width:1280px;height:70px;background:#f3f3f3"></div>
<div class="a" style="left:106px;top:50px;width:1px;height:62px;background:#dedede"></div>
<div class="a" style="left:348px;top:50px;width:1px;height:62px;background:#dedede"></div>
<div class="a" style="left:517px;top:50px;width:1px;height:62px;background:#dedede"></div>
<div class="a" style="left:656px;top:50px;width:1px;height:62px;background:#dedede"></div>
<div class="a" style="left:832px;top:50px;width:1px;height:62px;background:#dedede"></div>
<div class="a" style="left:1011px;top:50px;width:1px;height:62px;background:#dedede"></div>
<div class="a" style="left:1103px;top:50px;width:1px;height:62px;background:#dedede"></div>
<div class="a" style="left:115px;top:55px;width:111px;height:24px;border:1px solid #d2d2d2;border-bottom-color:#bdbdbd;border-radius:3px;background:#fff"></div>
<div class="a" style="left:211px;top:59px;width:1px;height:16px;background:#e0e0e0"></div>
<svg class="a" style="left:215.2px;top:64.3px" width="6" height="5"><path d="M0.5 0.5H5.5L3.0 4.5Z" fill="#666"/></svg>
<div class="t" style="left:120px;top:60px;font-size:12.2px;line-height:15px">Arial</div>
<div class="a" style="left:230px;top:55px;width:46px;height:24px;border:1px solid #d2d2d2;border-bottom-color:#bdbdbd;border-radius:3px;background:#fff"></div>
<div class="a" style="left:262px;top:59px;width:1px;height:16px;background:#e0e0e0"></div>
<svg class="a" style="left:266.4px;top:64.3px" width="6" height="5"><path d="M0.5 0.5H5.5L3.0 4.5Z" fill="#666"/></svg>
<div class="t" style="left:235px;top:60px;font-size:12.2px;line-height:15px">10</div>
<div class="a" style="left:281px;top:55px;width:58px;height:24px;border:1px solid #cfcfcf;border-bottom-color:#b4b4b4;border-radius:3px;background:linear-gradient(#fdfdfd,#f0f0f0)"></div>
<div class="a" style="left:310px;top:56px;width:1px;height:22px;background:#d6d6d6"></div>
<div class="a" style="left:115px;top:85px;width:98px;height:24px;border:1px solid #cfcfcf;border-bottom-color:#b4b4b4;border-radius:3px;background:linear-gradient(#fdfdfd,#f0f0f0)"></div>
<div class="a" style="left:116px;top:86px;width:28px;height:22px;background:#d9d9d9"></div>
<div class="a" style="left:144px;top:86px;width:1px;height:22px;background:#d6d6d6"></div>
<div class="a" style="left:173px;top:86px;width:1px;height:22px;background:#d6d6d6"></div>
<div class="a" style="left:201px;top:89px;width:1px;height:16px;background:#dadada"></div>
<div class="a" style="left:218px;top:85px;width:39px;height:24px;border:1px solid #cfcfcf;border-bottom-color:#b4b4b4;border-radius:3px;background:linear-gradient(#fdfdfd,#f0f0f0)"></div>
<div class="a" style="left:245px;top:89px;width:1px;height:16px;background:#dadada"></div>
<div class="a" style="left:262px;top:85px;width:77px;height:24px;border:1px solid #cfcfcf;border-bottom-color:#b4b4b4;border-radius:3px;background:linear-gradient(#fdfdfd,#f0f0f0)"></div>
<div class="a" style="left:299px;top:86px;width:1px;height:22px;background:#d6d6d6"></div>
<div class="a" style="left:287px;top:89px;width:1px;height:16px;background:#dadada"></div>
<div class="a" style="left:327px;top:89px;width:1px;height:16px;background:#dadada"></div>
<div class="a" style="left:357px;top:55px;width:87px;height:24px;border:1px solid #cfcfcf;border-bottom-color:#b4b4b4;border-radius:3px;background:linear-gradient(#fdfdfd,#f0f0f0)"></div>
<div class="a" style="left:416px;top:56px;width:27px;height:22px;background:#d9d9d9"></div>
<div class="a" style="left:386px;top:56px;width:1px;height:22px;background:#d6d6d6"></div>
<div class="a" style="left:415px;top:56px;width:1px;height:22px;background:#d6d6d6"></div>
<div class="a" style="left:449px;top:55px;width:36px;height:24px;border:1px solid #cfcfcf;border-bottom-color:#b4b4b4;border-radius:3px;background:linear-gradient(#fdfdfd,#f0f0f0)"></div>
<div class="a" style="left:357px;top:85px;width:87px;height:24px;border:1px solid #cfcfcf;border-bottom-color:#b4b4b4;border-radius:3px;background:linear-gradient(#fdfdfd,#f0f0f0)"></div>
<div class="a" style="left:386px;top:86px;width:1px;height:22px;background:#d6d6d6"></div>
<div class="a" style="left:415px;top:86px;width:1px;height:22px;background:#d6d6d6"></div>
<div class="a" style="left:449px;top:85px;width:58px;height:24px;border:1px solid #cfcfcf;border-bottom-color:#b4b4b4;border-radius:3px;background:linear-gradient(#fdfdfd,#f0f0f0)"></div>
<div class="a" style="left:478px;top:86px;width:1px;height:22px;background:#d6d6d6"></div>
<div class="a" style="left:665px;top:55px;width:158px;height:24px;border:1px solid #d2d2d2;border-bottom-color:#bdbdbd;border-radius:3px;background:#fff"></div>
<div class="a" style="left:809px;top:59px;width:1px;height:16px;background:#e0e0e0"></div>
<svg class="a" style="left:813.5px;top:64.5px" width="6" height="5"><path d="M0.5 0.5H5.5L3.0 4.5Z" fill="#666"/></svg>
<div class="t" style="left:670px;top:60px;font-size:12.3px;line-height:15px">General</div>
<div class="a" style="left:665px;top:85px;width:95px;height:24px;border:1px solid #cfcfcf;border-bottom-color:#b4b4b4;border-radius:3px;background:linear-gradient(#fdfdfd,#f0f0f0)"></div>
<div class="a" style="left:702px;top:86px;width:1px;height:22px;background:#d6d6d6"></div>
<div class="a" style="left:731px;top:86px;width:1px;height:22px;background:#d6d6d6"></div>
<div class="a" style="left:765px;top:85px;width:58px;height:24px;border:1px solid #cfcfcf;border-bottom-color:#b4b4b4;border-radius:3px;background:linear-gradient(#fdfdfd,#f0f0f0)"></div>
<div class="a" style="left:794px;top:86px;width:1px;height:22px;background:#d6d6d6"></div>
<div class="t" style="left:17.5px;top:89px;font-size:11px;line-height:14px">Paste</div>
<div class="t" style="left:553.5px;top:60px;font-size:11.2px;line-height:14px">Wrap Text</div>
<div class="t" style="left:554px;top:90px;font-size:11.2px;line-height:14px;color:#9a9a9a">Merge &amp; Center</div>
<div class="t" style="left:842px;width:57px;text-align:center;top:89px;font-size:11.3px;line-height:14px">Conditional</div>
<div class="t" style="left:842px;width:57px;text-align:center;top:101px;font-size:11.3px;line-height:14px">Formatting</div>
<div class="t" style="left:902px;width:50px;text-align:center;top:89px;font-size:11.3px;line-height:14px">Format</div>
<div class="t" style="left:902px;width:50px;text-align:center;top:101px;font-size:11.3px;line-height:14px">as Table</div>
<div class="t" style="left:955px;width:47px;text-align:center;top:89px;font-size:11.3px;line-height:14px">Cell</div>
<div class="t" style="left:955px;width:47px;text-align:center;top:101px;font-size:11.3px;line-height:14px">Styles</div>
<div class="t" style="left:1155px;width:43px;text-align:center;top:89px;font-size:11.3px;line-height:14px">Sort &amp;</div>
<div class="t" style="left:1155px;width:43px;text-align:center;top:101px;font-size:11.3px;line-height:14px">Filter</div>
<div class="t" style="left:1047px;top:52px;font-size:11.3px;line-height:14px">Insert</div>
<div class="t" style="left:1047px;top:75px;font-size:11.3px;line-height:14px">Delete</div>
<div class="t" style="left:1047px;top:98px;font-size:11.3px;line-height:14px">Format</div>
<svg class="a" style="left:1081.5px;top:56.5px" width="6" height="5"><path d="M0.5 0.5H5.5L3.0 4.5Z" fill="#666"/></svg>
<svg class="a" style="left:1085.4px;top:79.8px" width="6" height="5"><path d="M0.5 0.5H5.5L3.0 4.5Z" fill="#666"/></svg>
<svg class="a" style="left:1085.4px;top:102.8px" width="6" height="5"><path d="M0.5 0.5H5.5L3.0 4.5Z" fill="#666"/></svg>
<svg class="a" style="left:0;top:0" width="1280" height="117" viewBox="0 0 1280 117">
<rect x="95.5" y="3.5" width="15" height="13" rx="1.5" fill="none" stroke="#d8eee0" stroke-width="1.6"/>
<line x1="100.5" y1="3.5" x2="100.5" y2="16.5" stroke="#d8eee0" stroke-width="1.4"/>
<rect x="97" y="6" width="1.5" height="1.5" fill="#d8eee0"/><rect x="97" y="9" width="1.5" height="1.5" fill="#d8eee0"/><rect x="97" y="12" width="1.5" height="1.5" fill="#d8eee0"/>
<path d="M102.5 5.5H106.5L109 8V15H102.5Z" fill="none" stroke="#d8eee0" stroke-width="1.2"/>
<path d="M127 3.5H139L141 5.5V16.5H127Z" fill="#d8eee0" />
<rect x="129.5" y="5" width="9" height="5" fill="#217346"/>
<rect x="130.5" y="12" width="7" height="4.5" fill="#217346"/>
<rect x="132.5" y="13.5" width="3" height="3" fill="#d8eee0"/>
<path d="M157 6.8V14.8H165Z" fill="#5c9e7a"/>
<path d="M160.5 12.2Q163.5 6 167.5 6.2Q171.5 6.6 171.5 10.5Q171.3 13.5 168.5 15.3" fill="none" stroke="#5c9e7a" stroke-width="1.9"/>
<path d="M180 8H185.5L182.75 12Z" fill="#5c9e7a"/>
<path d="M202.6 7.4A5.3 5.3 0 1 0 210.3 6.6" fill="none" stroke="#d8eee0" stroke-width="2"/>
<path d="M212 5.2H207.3V10" fill="none" stroke="#d8eee0" stroke-width="1.9"/>
<rect x="232.5" y="5.5" width="9" height="1.5" fill="#d8eee0"/>
<path d="M232.5 8.5H241.5L237 13.5Z" fill="#d8eee0"/>
<path d="M563.5 2.5H571L574.5 6V17H563.5Z" fill="#e8f4ec"/>
<path d="M571 2.5V6H574.5" fill="#b9d9c5"/>
<line x1="565" y1="8" x2="573" y2="8" stroke="#9cc6ab" stroke-width="0.7"/>
<line x1="565" y1="10.5" x2="573" y2="10.5" stroke="#9cc6ab" stroke-width="0.7"/>
<line x1="565" y1="13" x2="573" y2="13" stroke="#9cc6ab" stroke-width="0.7"/>
<line x1="568.5" y1="7" x2="568.5" y2="15.5" stroke="#9cc6ab" stroke-width="0.7"/>
<circle cx="1025" cy="8.5" r="3.8" fill="none" stroke="#cfe3d6" stroke-width="1.3"/>
<line x1="1027.8" y1="11.3" x2="1031" y2="14.5" stroke="#cfe3d6" stroke-width="1.5"/>
<path d="M1034 9L1036 11L1038 9" fill="none" stroke="#cfe3d6" stroke-width="0.9"/>
<circle cx="1251" cy="7.5" r="2.6" fill="#e6f2ea"/>
<path d="M1245.5 15.5C1245.5 11.5 1247.5 10.5 1251 10.5C1254.5 10.5 1256.5 11.5 1256.5 15.5Z" fill="#e6f2ea"/>
<rect x="1257" y="9.3" width="5" height="1.4" fill="#e6f2ea"/><rect x="1258.8" y="7.5" width="1.4" height="5" fill="#e6f2ea"/>
<circle cx="1223" cy="34.5" r="7" fill="none" stroke="#d8eee0" stroke-width="1.3"/>
<circle cx="1220.5" cy="32.5" r="0.9" fill="#d8eee0"/><circle cx="1225.5" cy="32.5" r="0.9" fill="#d8eee0"/>
<path d="M1219.5 36 Q1223 39.5 1226.5 36" fill="none" stroke="#d8eee0" stroke-width="1.2"/>
<path d="M1235.5 33H1240L1237.75 36Z" fill="#d8eee0"/>
<path d="M1254 36.5L1258 32.5L1262 36.5" fill="none" stroke="#e6f2ea" stroke-width="2"/>
<rect x="15" y="57" width="22" height="24.5" rx="2" fill="#e6a95e"/>
<path d="M19.5 61.5V59.5Q19.5 57 22 57H30Q32.5 57 32.5 59.5V61.5Z" fill="#6e6e6e"/>
<rect x="24" y="54" width="4.5" height="4" rx="1.5" fill="#6e6e6e"/>
<rect x="25.3" y="55.3" width="1.8" height="1.5" fill="#ddd"/>
<path d="M22.5 64.5H33.5L38.5 69.5V83.5H22.5Z" fill="#fff" stroke="#9a9a9a" stroke-width="0.8"/>
<path d="M33.5 64.5V69.5H38.5" fill="none" stroke="#9a9a9a" stroke-width="0.8"/>
<path d="M48 68H53.5L50.75 71.8Z" fill="#555"/>
<path d="M68.9 51L70.4 51.2L77.8 61L76.3 62.3L72 57.3Z" fill="#151515"/>
<path d="M79.1 51L77.6 51.2L70.2 61L71.7 62.3L76 57.3Z" fill="#151515"/>
<circle cx="70.2" cy="63.9" r="2.3" fill="#eef5fc" stroke="#3a6fb0" stroke-width="1.1"/>
<circle cx="77.8" cy="63.9" r="2.3" fill="#eef5fc" stroke="#3a6fb0" stroke-width="1.1"/>
<path d="M67.5 78.5H73.5L76.5 81.5V89.5H67.5Z" fill="#fff" stroke="#8e8e8e" stroke-width="0.8"/>
<path d="M71.8 74.3H77.3L80.3 77.3V85.2H71.8Z" fill="#fff" stroke="#8e8e8e" stroke-width="0.8"/>
<path d="M77.3 74.3V77.3H80.3" fill="none" stroke="#8e8e8e" stroke-width="0.7"/>
<path d="M89 79.8H94.5L91.75 83.6Z" fill="#555"/>
<defs><linearGradient id="bg1" x1="1" y1="0" x2="0" y2="1"><stop offset="0.3" stop-color="#f0f0f0"/><stop offset="0.5" stop-color="#cdb9a5"/><stop offset="0.68" stop-color="#4a88cc"/><stop offset="1" stop-color="#2256a0"/></linearGradient></defs>
<path d="M76.5 102L80.3 98.2" stroke="#7a7a7a" stroke-width="4.4" stroke-linecap="round"/>
<path d="M76.5 102L80.3 98.2" stroke="#f2f2f2" stroke-width="2.6" stroke-linecap="round"/>
<path d="M73.9 100.3L79.6 105.8L73.1 111.6L66.4 105.1Z" fill="url(#bg1)" stroke="#6a6a6a" stroke-width="0.7" stroke-linejoin="round"/>
<text x="286.8" y="72" font-family="Liberation Sans" font-size="15" fill="#333" stroke="#333" stroke-width="0.45">A</text>
<path d="M299 67.8H306.5L302.75 64Z" fill="#3d85d0"/>
<text x="317" y="71" font-family="Liberation Sans" font-size="12.5" fill="#333" stroke="#333" stroke-width="0.4">A</text>
<path d="M327 65H334.5L330.75 69Z" fill="#3d85d0"/>
<text x="125.3" y="101.8" font-family="Liberation Sans" font-size="13.2" font-weight="bold" fill="#333" stroke="#333" stroke-width="0.3">B</text>
<text x="155" y="101.8" font-family="Liberation Serif" font-size="13.5" font-style="italic" fill="#333" stroke="#333" stroke-width="0.25">I</text>
<text x="183" y="100.5" font-family="Liberation Sans" font-size="12" fill="#333" stroke="#333" stroke-width="0.4">U</text>
<rect x="183" y="102.8" width="10" height="1.2" fill="#333"/>
<path d="M205 95.5H210.5L207.75 99.2Z" fill="#555"/>
<line x1="224.5" y1="88" x2="224.5" y2="103" stroke="#8a8a8a" stroke-width="0.8" stroke-dasharray="1 1.2"/>
<line x1="232.5" y1="88" x2="232.5" y2="103" stroke="#8a8a8a" stroke-width="0.8" stroke-dasharray="1 1.2"/>
<line x1="240.5" y1="88" x2="240.5" y2="103" stroke="#8a8a8a" stroke-width="0.8" stroke-dasharray="1 1.2"/>
<line x1="224" y1="88" x2="241" y2="88" stroke="#8a8a8a" stroke-width="0.8" stroke-dasharray="1 1.2"/>
<line x1="224" y1="95.5" x2="241" y2="95.5" stroke="#8a8a8a" stroke-width="0.8" stroke-dasharray="1 1.2"/>
<rect x="224" y="103.5" width="17" height="1.4" fill="#333"/>
<path d="M249 95.5H254.5L251.75 99.2Z" fill="#555"/>
<path d="M268.3 94.8L272.3 90.7L276.8 95.5L272.8 99.6Z" fill="#fff" stroke="#555" stroke-width="1" stroke-linejoin="round"/>
<path d="M271.6 92L275.9 96.5" stroke="#3d85d0" stroke-width="1.6"/>
<path d="M273 92Q273 87.3 274.6 87.3Q276 87.3 275.6 92.6" fill="none" stroke="#222" stroke-width="1.1"/>
<path d="M276 92.3Q280.3 92.3 278.8 98.3" fill="none" stroke="#3d85d0" stroke-width="1.7"/>
<rect x="265.3" y="101.4" width="17" height="4.3" rx="0.8" fill="#f4ef5c" stroke="#e3da3a" stroke-width="0.4"/>
<path d="M291 95.5H296.5L293.75 99.2Z" fill="#555"/>
<text x="308.7" y="99" font-family="Liberation Sans" font-size="14" fill="#333" stroke="#333" stroke-width="0.45">A</text>
<rect x="305" y="101" width="18" height="4.7" rx="0.6" fill="#e8101b"/>
<path d="M331 95.5H336.5L333.75 99.2Z" fill="#555"/>
<path d="M215 64H221L218 68Z" fill="#555"/>
<rect x="366" y="60.8" width="12" height="1.1" fill="#333"/><rect x="366" y="63.8" width="12" height="1.1" fill="#333"/>
<rect x="395" y="64.8" width="12" height="1.1" fill="#333"/><rect x="395" y="67.8" width="12" height="1.1" fill="#333"/>
<rect x="424" y="69" width="12" height="1.1" fill="#333"/><rect x="424" y="72" width="12" height="1.1" fill="#333"/>
<text x="0" y="0" font-family="Liberation Sans" font-size="12" fill="#222" stroke="#222" stroke-width="0.25" transform="translate(459.4 72.9) rotate(-45)">ab</text>
<path d="M462.2 74.7L470.5 66.4" stroke="#2f72bb" stroke-width="1"/><path d="M472.3 64.6L467.6 65.6L471.3 69.3Z" fill="#2f72bb"/>
<path d="M477 65H482.5L479.75 68.8Z" fill="#555"/>
<rect x="365.50" y="91.80" width="13" height="1.3" fill="#333"/>
<rect x="365.50" y="94.85" width="8.4" height="1.3" fill="#333"/>
<rect x="365.50" y="97.90" width="14.6" height="1.3" fill="#333"/>
<rect x="365.50" y="100.95" width="10.6" height="1.3" fill="#333"/>
<rect x="395.25" y="91.80" width="12.5" height="1.3" fill="#333"/>
<rect x="397.50" y="94.85" width="8" height="1.3" fill="#333"/>
<rect x="394.20" y="97.90" width="14.6" height="1.3" fill="#333"/>
<rect x="396.25" y="100.95" width="10.5" height="1.3" fill="#333"/>
<rect x="424.10" y="91.80" width="13" height="1.3" fill="#333"/>
<rect x="428.70" y="94.85" width="8.4" height="1.3" fill="#333"/>
<rect x="422.50" y="97.90" width="14.6" height="1.3" fill="#333"/>
<rect x="426.50" y="100.95" width="10.6" height="1.3" fill="#333"/>
<rect x="462.50" y="92.00" width="9.5" height="1.3" fill="#333"/>
<rect x="491.70" y="92.00" width="9.5" height="1.3" fill="#333"/>
<rect x="465.50" y="95.05" width="6.5" height="1.3" fill="#333"/>
<rect x="494.70" y="95.05" width="6.5" height="1.3" fill="#333"/>
<rect x="465.50" y="98.10" width="6.5" height="1.3" fill="#333"/>
<rect x="494.70" y="98.10" width="6.5" height="1.3" fill="#333"/>
<rect x="462.50" y="101.15" width="9.5" height="1.3" fill="#333"/>
<rect x="491.70" y="101.15" width="9.5" height="1.3" fill="#333"/>
<path d="M455 96.5L459 92.5V94.8H462.5V98.3H459V100.5Z" fill="#3d85d0"/>
<path d="M492 96.5L488 92.5V94.8H484.5V98.3H488V100.5Z" fill="#3d85d0"/>
<rect x="530.5" y="61.5" width="10" height="11.5" fill="#fff" stroke="#8a8a8a" stroke-width="0.9"/>
<rect x="532" y="63.8" width="12" height="1.1" fill="#333"/><rect x="532" y="67" width="6.5" height="1.1" fill="#333"/><rect x="532" y="70.2" width="3.5" height="1.1" fill="#333"/>
<path d="M545.5 64Q550 66.5 548.5 70.2Q547.5 72 545 72" fill="none" stroke="#3d85d0" stroke-width="1.7"/>
<path d="M546.5 69L542.5 72.3L546.5 74.5Z" fill="#3d85d0"/>
<rect x="531.5" y="88.5" width="15.5" height="15.5" fill="none" stroke="#c9c9c9" stroke-width="1"/>
<line x1="531.5" y1="93" x2="547" y2="93" stroke="#d5d5d5" stroke-width="0.8"/><line x1="531.5" y1="100" x2="547" y2="100" stroke="#d5d5d5" stroke-width="0.8"/>
<line x1="539" y1="88.5" x2="539" y2="93" stroke="#d5d5d5" stroke-width="0.8"/><line x1="539" y1="100" x2="539" y2="104" stroke="#d5d5d5" stroke-width="0.8"/>
<path d="M534 96.5H544.5M535.8 94.8L534 96.5L535.8 98.2M542.7 94.8L544.5 96.5L542.7 98.2" fill="none" stroke="#a8c6e6" stroke-width="0.9"/>
<path d="M639.3 95.2H644.3L641.8 98.7Z" fill="#bbb"/>
<ellipse cx="681.3" cy="98.5" rx="4.7" ry="2" fill="#b57a25"/>
<ellipse cx="681.3" cy="97.2" rx="4.7" ry="2" fill="#f3c45f" stroke="#a8701f" stroke-width="0.5"/>
<ellipse cx="681.3" cy="95.8" rx="4.7" ry="2" fill="#b57a25"/>
<ellipse cx="681.3" cy="94.5" rx="4.7" ry="2" fill="#f3c45f" stroke="#a8701f" stroke-width="0.5"/>
<ellipse cx="681.3" cy="93.1" rx="4.7" ry="2" fill="#b57a25"/>
<ellipse cx="681.3" cy="91.8" rx="4.7" ry="2" fill="#f3c45f" stroke="#a8701f" stroke-width="0.5"/>
<ellipse cx="672.5" cy="103.89999999999999" rx="4.7" ry="2" fill="#b57a25"/>
<ellipse cx="672.5" cy="102.6" rx="4.7" ry="2" fill="#f3c45f" stroke="#a8701f" stroke-width="0.5"/>
<ellipse cx="672.5" cy="101.8" rx="4.7" ry="2" fill="#b57a25"/>
<ellipse cx="672.5" cy="100.5" rx="4.7" ry="2" fill="#f3c45f" stroke="#a8701f" stroke-width="0.5"/>
<ellipse cx="672.5" cy="99.1" rx="4.7" ry="2" fill="#b57a25"/>
<ellipse cx="672.5" cy="97.8" rx="4.7" ry="2" fill="#f3c45f" stroke="#a8701f" stroke-width="0.5"/>
<rect x="690" y="88" width="1" height="18" fill="#dcdcdc"/>
<path d="M694.5 95H699L696.75 98.4Z" fill="#555"/>
<text x="710.5" y="103" font-family="Liberation Sans" font-size="15" fill="#333">%</text>
<path d="M742.8 93.2Q749.6 94.8 749.4 98.6Q749.2 102 743.6 103.4Q746.6 100.6 746.4 98.4Q746.2 96.6 744.2 96.2Q742.6 95.6 742.8 93.2Z" fill="#333"/>
<path d="M772 93L776 90V91.8H780V94.3H776V96Z" fill="#3d85d0"/>
<text x="780.5" y="96" font-family="Liberation Sans" font-size="9" fill="#333">.0</text>
<text x="775.5" y="104" font-family="Liberation Sans" font-size="9" fill="#333">.00</text>
<text x="805" y="96" font-family="Liberation Sans" font-size="9" fill="#333">.00</text>
<text x="809.5" y="104" font-family="Liberation Sans" font-size="9" fill="#333">.0</text>
<path d="M809 101L805 98V99.8H801V102.3H805V104Z" fill="#3d85d0"/>
<rect x="851.5" y="57.5" width="26" height="24" fill="#fff" stroke="#999" stroke-width="0.8"/>
<rect x="858" y="58" width="5.7" height="5" fill="#e8707a"/>
<rect x="858" y="63.5" width="9.8" height="6" fill="#4a90d9"/>
<rect x="858" y="69.5" width="12.5" height="6" fill="#e8707a"/>
<rect x="858" y="75.5" width="5.7" height="5.8" fill="#4a90d9"/>
<line x1="857.8" y1="57.5" x2="857.8" y2="81.5" stroke="#aaa" stroke-width="0.6"/>
<line x1="864" y1="57.5" x2="864" y2="81.5" stroke="#aaa" stroke-width="0.6"/>
<line x1="870.8" y1="57.5" x2="870.8" y2="81.5" stroke="#aaa" stroke-width="0.6"/>
<line x1="851.5" y1="63.5" x2="877.5" y2="63.5" stroke="#aaa" stroke-width="0.6"/>
<line x1="851.5" y1="69.5" x2="877.5" y2="69.5" stroke="#aaa" stroke-width="0.6"/>
<line x1="851.5" y1="75.5" x2="877.5" y2="75.5" stroke="#aaa" stroke-width="0.6"/>
<rect x="865.8" y="71.6" width="14.6" height="12.6" rx="1" fill="#fff" stroke="#999" stroke-width="0.8"/>
<text x="868.6" y="82.6" font-family="Liberation Sans" font-size="13" fill="#222">≠</text>
<path d="M885 68H890.5L887.75 71.6Z" fill="#555"/>
<rect x="908" y="58.5" width="26.5" height="22" fill="#fff" stroke="#999" stroke-width="0.8"/>
<rect x="915" y="63.5" width="19.5" height="17" fill="#c8dff5"/>
<line x1="914.6" y1="58.5" x2="914.6" y2="80.5" stroke="#aaa" stroke-width="0.6"/>
<line x1="921.2" y1="58.5" x2="921.2" y2="80.5" stroke="#aaa" stroke-width="0.6"/>
<line x1="927.8" y1="58.5" x2="927.8" y2="80.5" stroke="#aaa" stroke-width="0.6"/>
<line x1="908" y1="64.0" x2="934.5" y2="64.0" stroke="#aaa" stroke-width="0.6"/>
<line x1="908" y1="69.5" x2="934.5" y2="69.5" stroke="#aaa" stroke-width="0.6"/>
<line x1="908" y1="75.0" x2="934.5" y2="75.0" stroke="#aaa" stroke-width="0.6"/>
<path d="M926.5 76L939.3 63.7" stroke="#8a8a8a" stroke-width="4.2" stroke-linecap="round"/>
<path d="M926.5 76L939.3 63.7" stroke="#f0f0f0" stroke-width="2.6" stroke-linecap="round"/>
<ellipse cx="924.6" cy="77.6" rx="4.4" ry="3.3" transform="rotate(-45 924.6 77.6)" fill="#e6a75c" stroke="#b7823f" stroke-width="0.6"/>
<path d="M921.2 79.8Q919.5 83.6 914.6 84.7Q919.5 85.6 923.5 83.8Q926.3 82.5 927.6 80.8Q924 82 921.2 79.8Z" fill="#3579c9"/>
<path d="M943 68H948.5L945.75 71.6Z" fill="#555"/>
<rect x="959.5" y="58.5" width="26.5" height="22" fill="#fff" stroke="#999" stroke-width="0.8"/>
<rect x="965.0" y="63" width="15.5" height="12.5" fill="#c8dff5"/>
<line x1="965.0" y1="58.5" x2="965.0" y2="80.5" stroke="#aaa" stroke-width="0.6"/>
<line x1="980.5" y1="58.5" x2="980.5" y2="80.5" stroke="#aaa" stroke-width="0.6"/>
<line x1="959.5" y1="63" x2="986.0" y2="63" stroke="#aaa" stroke-width="0.6"/>
<line x1="959.5" y1="75.5" x2="986.0" y2="75.5" stroke="#aaa" stroke-width="0.6"/>
<path d="M978.0 76L990.8 63.7" stroke="#8a8a8a" stroke-width="4.2" stroke-linecap="round"/>
<path d="M978.0 76L990.8 63.7" stroke="#f0f0f0" stroke-width="2.6" stroke-linecap="round"/>
<ellipse cx="976.1" cy="77.6" rx="4.4" ry="3.3" transform="rotate(-45 976.1 77.6)" fill="#e6a75c" stroke="#b7823f" stroke-width="0.6"/>
<path d="M972.7 79.8Q971.0 83.6 966.1 84.7Q971.0 85.6 975.0 83.8Q977.8 82.5 979.1 80.8Q975.5 82 972.7 79.8Z" fill="#3579c9"/>
<path d="M994.4 68H999.9L997.15 71.6Z" fill="#555"/>
<rect x="1030.5" y="51.5" width="10.5" height="14.8" fill="#fff" stroke="#999" stroke-width="0.8"/>
<line x1="1035.8" y1="51.5" x2="1035.8" y2="66.3" stroke="#aaa" stroke-width="0.6"/>
<line x1="1030.5" y1="56.4" x2="1041.0" y2="56.4" stroke="#aaa" stroke-width="0.6"/>
<line x1="1030.5" y1="61.4" x2="1041.0" y2="61.4" stroke="#aaa" stroke-width="0.6"/>
<rect x="1032" y="55.5" width="10.8" height="4.3" fill="#4caf50"/>
<path d="M1025 57.6L1029 54V56.3H1032V58.9H1029V61.2Z" fill="#4caf50"/>
<rect x="1027.5" y="74.5" width="10" height="15" fill="#fff" stroke="#999" stroke-width="0.8"/>
<line x1="1032.5" y1="74.5" x2="1032.5" y2="89.5" stroke="#aaa" stroke-width="0.6"/>
<line x1="1027.5" y1="79.5" x2="1037.5" y2="79.5" stroke="#aaa" stroke-width="0.6"/>
<line x1="1027.5" y1="84.5" x2="1037.5" y2="84.5" stroke="#aaa" stroke-width="0.6"/>
<rect x="1025" y="78.4" width="11" height="4" fill="#e04848"/>
<path d="M1038.3 78.6L1042.5 82.5M1042.5 78.6L1038.3 82.5" stroke="#e04848" stroke-width="1.3"/>
<rect x="1025.5" y="100.5" width="17.3" height="12.5" fill="#fff" stroke="#999" stroke-width="0.8"/>
<line x1="1029.8" y1="100.5" x2="1029.8" y2="113.0" stroke="#aaa" stroke-width="0.6"/>
<line x1="1034.2" y1="100.5" x2="1034.2" y2="113.0" stroke="#aaa" stroke-width="0.6"/>
<line x1="1038.5" y1="100.5" x2="1038.5" y2="113.0" stroke="#aaa" stroke-width="0.6"/>
<line x1="1025.5" y1="104.7" x2="1042.8" y2="104.7" stroke="#aaa" stroke-width="0.6"/>
<line x1="1025.5" y1="108.8" x2="1042.8" y2="108.8" stroke="#aaa" stroke-width="0.6"/>
<rect x="1029.6" y="103" width="5.2" height="6.3" fill="#3a7fcc"/>
<path d="M1026.5 97.3H1038M1026.5 96V98.6M1038 96V98.6" stroke="#3d85d0" stroke-width="0.9" fill="none"/>
<path d="M1028.5 96.2L1027.2 97.3L1028.5 98.4M1036 96.2L1037.3 97.3L1036 98.4" stroke="#3d85d0" stroke-width="0.7" fill="none"/>
<path d="M1120.5 51.5H1133V54.2H1124.8L1129.2 58.9L1124.5 64H1133.2V66.5H1120.5V64.3L1125.6 58.9L1120.5 53.5Z" fill="#616161"/>
<path d="M1141 57H1146L1143.5 60.4Z" fill="#555"/>
<rect x="1119.5" y="74.5" width="13" height="15" fill="#fff" stroke="#999" stroke-width="0.8"/>
<rect x="1120" y="75" width="12" height="2.3" fill="#bdbdbd"/>
<path d="M1124.5 79.5H1127.5V82.5H1129.7L1126 86.5L1122.3 82.5H1124.5Z" fill="#3d85d0"/>
<path d="M1138.3 80H1143.3L1140.8 83.6Z" fill="#555"/>
<path d="M1118.5 108L1128.5 98Q1130 96.8 1131.5 98L1133.5 100Q1134.5 101.5 1133.5 102.5L1123.5 112.5Q1122 113.5 1120.5 112.5L1118.5 110.5Q1117.6 109 1118.5 108Z" fill="#e07a92" stroke="#b9506b" stroke-width="0.7"/>
<path d="M1120 106.5L1126 112.5" stroke="#f5b9c6" stroke-width="1"/>
<path d="M1138.3 103H1143.3L1140.8 106.6Z" fill="#555"/>
<text x="1158.3" y="68.8" font-family="Liberation Sans" font-size="14.5" font-weight="bold" fill="#3d85d0">A</text>
<text x="1159.6" y="82" font-family="Liberation Sans" font-size="14" font-weight="bold" fill="#666">Z</text>
<ellipse cx="1180" cy="63.3" rx="8.8" ry="2.3" fill="#9e9e9e" stroke="#777" stroke-width="0.6"/>
<path d="M1171.3 63.5Q1172 66 1177.5 71V79Q1177.5 80 1180 80Q1182.5 80 1182.5 79V71Q1188 66 1188.8 63.5Q1185 66 1180 66Q1175 66 1171.3 63.5Z" fill="#7a7a7a"/>
<ellipse cx="1180" cy="63.3" rx="7" ry="1.4" fill="#e0e0e0"/>
<path d="M1192 68H1197L1194.5 71.6Z" fill="#555"/>
</svg>
</body></html>
